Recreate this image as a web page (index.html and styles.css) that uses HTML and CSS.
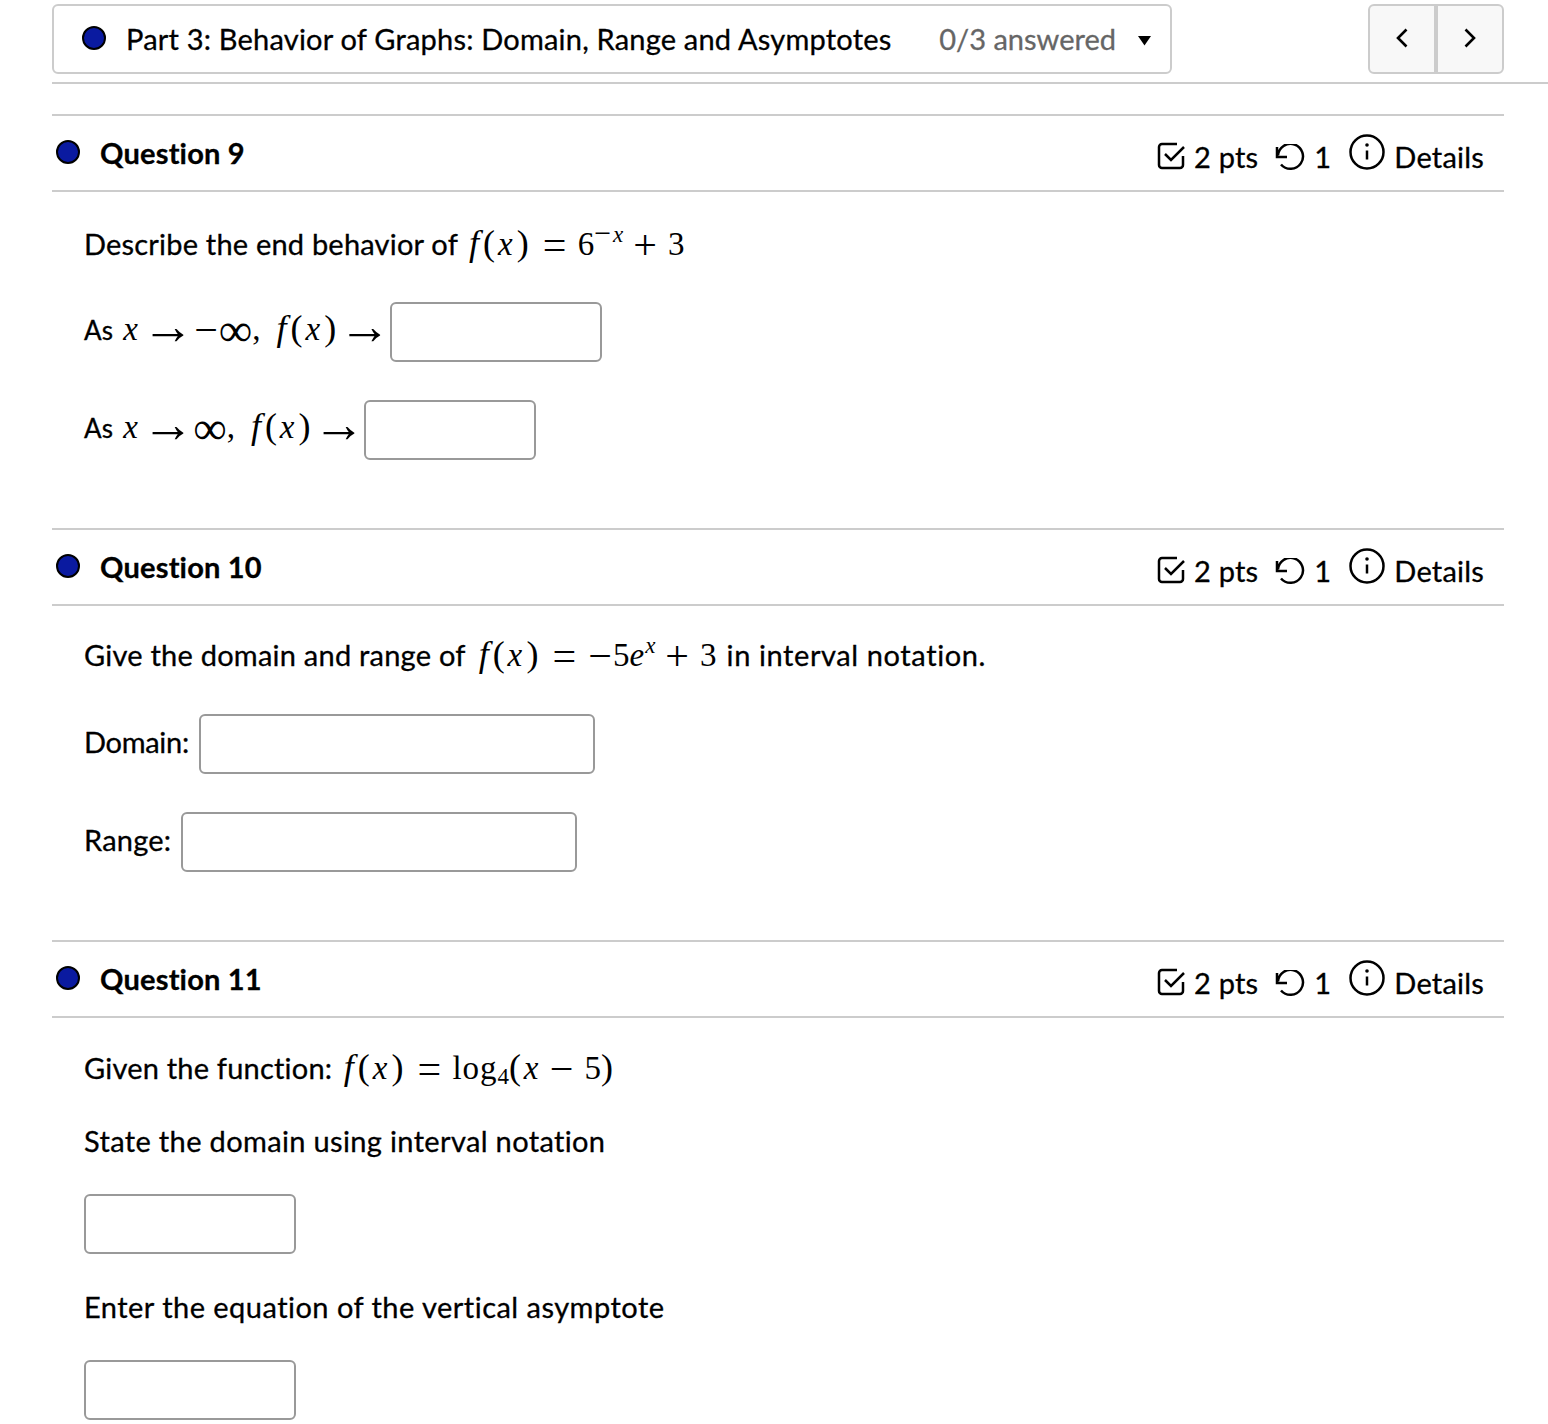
FILE: index.html
```html
<!DOCTYPE html>
<html lang="en">
<head>
<meta charset="utf-8">
<title>Part 3: Behavior of Graphs</title>
<link rel="stylesheet" href="styles.css">
</head>
<body>
<header class="topbar">
  <div class="part">
    <span class="dot part-dot"></span>
    <span class="part-title">Part 3: Behavior of Graphs: Domain, Range and Asymptotes</span>
    <span class="part-count">0/3 answered</span>
    <svg class="caret" viewBox="0 0 15 11"><path d="M1 1H14L7.500 10.500Z"/></svg>
  </div>
  <div class="pager">
    <button class="page-btn"><svg viewBox="0 0 12 20"><path d="M10.500 1.500L2 10L10.500 18.500"/></svg></button>
    <button class="page-btn"><svg viewBox="0 0 12 20"><path d="M1.500 1.500L10 10L1.500 18.500"/></svg></button>
  </div>
</header>

<main class="questions">
  <section class="question q-tall">
    <div class="q-head">
      <span class="dot"></span><h2>Question 9</h2>
      <div class="meta">
        <svg class="ic-check" viewBox="0 0 28 28"><path d="M8 12l6 6L27 5"/><path d="M26 14v9a3 3 0 0 1-3 3H5a3 3 0 0 1-3-3V5a3 3 0 0 1 3-3h15"/></svg>
        <span class="pts">2 pts</span>
        <svg class="ic-retry" viewBox="0 0 30 28"><path d="M3 11.500A12.500 12.500 0 1 1 6 20.500"/><path d="M2 3v10h10"/></svg>
        <span class="tries">1</span>
        <svg class="ic-info" viewBox="0 0 36 36"><circle cx="18" cy="18" r="16.500"/><path d="M18 16.500v9"/><circle class="fill" cx="18" cy="11" r="1.800"/></svg>
        <span class="details">Details</span>
      </div>
    </div>
    <div class="q-body">
      <p class="line">Describe the end behavior of <span class="math"><i class="f">f</i><span class="p">(</span><i class="x">x</i><span class="p">)</span><span class="rel">=</span>6<sup><span class="mn">−</span><i class="x">x</i></sup><span class="bin">+</span>3</span></p>
      <div class="answer first"><span class="sm">As<span class="math lead"><i class="x">x</i><span class="arr">→</span><span class="un">−</span><span class="inf">∞</span><span class="cm">,</span><i class="f">f</i><span class="p">(</span><i class="x">x</i><span class="p">)</span><span class="arr">→</span></span></span><input class="box w-210" type="text" aria-label="answer"></div>
      <div class="answer"><span class="sm">As<span class="math lead"><i class="x">x</i><span class="arr">→</span><span class="inf">∞</span><span class="cm">,</span><i class="f">f</i><span class="p">(</span><i class="x">x</i><span class="p">)</span><span class="arr">→</span></span></span><input class="box w-170" type="text" aria-label="answer"></div>
    </div>
  </section>

  <section class="question">
    <div class="q-head">
      <span class="dot"></span><h2>Question 10</h2>
      <div class="meta">
        <svg class="ic-check" viewBox="0 0 28 28"><path d="M8 12l6 6L27 5"/><path d="M26 14v9a3 3 0 0 1-3 3H5a3 3 0 0 1-3-3V5a3 3 0 0 1 3-3h15"/></svg>
        <span class="pts">2 pts</span>
        <svg class="ic-retry" viewBox="0 0 30 28"><path d="M3 11.500A12.500 12.500 0 1 1 6 20.500"/><path d="M2 3v10h10"/></svg>
        <span class="tries">1</span>
        <svg class="ic-info" viewBox="0 0 36 36"><circle cx="18" cy="18" r="16.500"/><path d="M18 16.500v9"/><circle class="fill" cx="18" cy="11" r="1.800"/></svg>
        <span class="details">Details</span>
      </div>
    </div>
    <div class="q-body">
      <p class="line give">Give the domain and range of <span class="math shift"><i class="f">f</i><span class="p">(</span><i class="x">x</i><span class="p">)</span><span class="rel">=</span><span class="un">−</span>5<i class="e">e</i><sup><i class="x">x</i></sup><span class="bin">+</span>3</span><span class="tail"> in interval notation.</span></p>
      <div class="answer give-first"><span class="narrow">Domain:</span><input class="box w-394" type="text" aria-label="Domain"></div>
      <div class="answer"><span class="label">Range:</span><input class="box w-394" type="text" aria-label="Range"></div>
    </div>
  </section>

  <section class="question">
    <div class="q-head">
      <span class="dot"></span><h2>Question 11</h2>
      <div class="meta">
        <svg class="ic-check" viewBox="0 0 28 28"><path d="M8 12l6 6L27 5"/><path d="M26 14v9a3 3 0 0 1-3 3H5a3 3 0 0 1-3-3V5a3 3 0 0 1 3-3h15"/></svg>
        <span class="pts">2 pts</span>
        <svg class="ic-retry" viewBox="0 0 30 28"><path d="M3 11.500A12.500 12.500 0 1 1 6 20.500"/><path d="M2 3v10h10"/></svg>
        <span class="tries">1</span>
        <svg class="ic-info" viewBox="0 0 36 36"><circle cx="18" cy="18" r="16.500"/><path d="M18 16.500v9"/><circle class="fill" cx="18" cy="11" r="1.800"/></svg>
        <span class="details">Details</span>
      </div>
    </div>
    <div class="q-body q-body-last">
      <p class="line tight">Given the function: <span class="math"><i class="f">f</i><span class="p">(</span><i class="x">x</i><span class="p">)</span><span class="rel">=</span><span class="log">log</span><sub>4</sub><span class="p">(</span><i class="x">x</i><span class="bin">−</span>5<span class="p">)</span></span></p>
      <p class="line state">State the domain using interval notation</p>
      <input class="box w-210 block" type="text" aria-label="Domain">
      <p class="line enter">Enter the equation of the vertical asymptote</p>
      <input class="box w-210 block" type="text" aria-label="Asymptote">
    </div>
  </section>
</main>
</body>
</html>
```
FILE: styles.css
```css
* { box-sizing: border-box; }
html, body { margin: 0; padding: 0; }
body { background: #fff; color: #000; font-family: Lato, sans-serif; font-size: 29px; letter-spacing: 0.2px; -webkit-text-stroke: 0.3px; height: 1424px; overflow: hidden; }

.topbar { display: flex; justify-content: space-between; align-items: flex-start; margin: 4px 0 0 52px; padding: 0 44px 8px 0; border-bottom: 2px solid #ccc; height: 80px; }
.part { width: 1120px; height: 70px; border: 2px solid #ccc; border-radius: 6px; display: flex; align-items: center; padding: 0 18px 2px 28px; }
.part-title { margin-left: 20px; flex: 1; }
.part-count { color: #666; margin-right: 21px; letter-spacing: 0; }
.caret { width: 15px; height: 11px; fill: #000; margin-top: 4px; }
.dot { width: 24px; height: 24px; border-radius: 50%; background: #0a1aa0; border: 2px solid #000; flex: none; }

.pager { display: flex; width: 136px; height: 70px; background: #f8f8f8; border: 2px solid #ccc; border-radius: 6px; }
.page-btn { flex: 1; background: none; border: 0; padding: 0 0 2px; display: flex; align-items: center; justify-content: center; }
.page-btn + .page-btn { border-left: 4px solid #ccc; }
.page-btn svg { width: 12px; height: 20px; fill: none; stroke: #000; stroke-width: 2.600; }

.questions { margin: 30px 44px 0 52px; }
.question { height: 412px; border-top: 2px solid #ccc; }
.q-tall { height: 414px; }
.q-head { height: 76px; border-bottom: 2px solid #ccc; display: flex; align-items: center; padding: 0 20px 2px 4px; }
.q-head h2 { margin: 0 0 0 20px; font-size: 29px; font-weight: 700; }
.meta { margin-left: auto; display: flex; align-items: center; padding-top: 8px; }
.meta svg { fill: none; stroke: #000; stroke-width: 2.500; flex: none; }
.ic-check { width: 28px; height: 28px; }
.ic-retry { width: 30px; height: 28px; margin-left: 17px; margin-top: 3px; }
.ic-info { width: 36px; height: 36px; margin-left: 18px; margin-top: -9px; }
.ic-info .fill { fill: #000; stroke: none; }
.pts { margin-left: 9px; }
.tries { margin-left: 9px; }
.details { margin-left: 9px; }

.q-body { padding: 0 32px; }
.q-body-last { height: 400px; }
.line { margin: 34px 0 0; line-height: 36px; }
.tight { margin-top: 32px; }
.give { margin-top: 31px; letter-spacing: 0.23px; }
.answer { display: flex; align-items: center; gap: 10px; height: 60px; margin-top: 38px; }
.first { margin-top: 40px; }
.give-first { margin-top: 41px; }
.answer > span { padding-bottom: 6px; }
.answer > .sm { font-size: 26px; padding-bottom: 4px; }
.narrow { letter-spacing: -0.3px; }
.tail { letter-spacing: 0.6px; margin-left: 2px; }

.math { font-family: "Liberation Serif", serif; font-size: 33px; line-height: 0; letter-spacing: 0; -webkit-text-stroke: 0; margin-left: 1px; }
.shift { margin-left: 3px; }
.lead { margin-left: 10px; margin-right: -10px; }
.f { font-size: 36px; padding-left: 3px; letter-spacing: 4px; }
.x { letter-spacing: 4.200px; }
.e { letter-spacing: 1px; }
.p { letter-spacing: 2.800px; font-size: 36px; }
.log { letter-spacing: 1px; }
.rel, .bin, .un { font-size: 42px; line-height: 0; vertical-align: -4px; }
.rel { margin: 0 11.200px; }
.bin { margin: 0 11px 0 7px; }
.un { margin: 0 1px; }
.arr { font-size: 52px; margin: 0 -0.5px; line-height: 0; vertical-align: -4px; }
.inf { font-size: 47px; line-height: 0; vertical-align: -6px; }
.cm { margin-right: 13px; letter-spacing: 0; }
sup, sub { font-size: 23px; line-height: 0; }
sup { vertical-align: 13px; }
sub { vertical-align: -5px; }
sup .x, sub .x { letter-spacing: 3px; }
.mn { font-size: 30px; margin-right: 2px; vertical-align: -1px; }

.box { height: 60px; border: 2px solid #999; border-radius: 6px; background: #fff; padding: 0; margin: 0; }
.block { display: block; margin-top: 35px; }
.w-210 { width: 212px; }
.w-170 { width: 172px; }
.w-394 { width: 396px; }
.state { margin-top: 37px; letter-spacing: 0.35px; }
.enter { margin-top: 35px; letter-spacing: 0.47px; }
```
